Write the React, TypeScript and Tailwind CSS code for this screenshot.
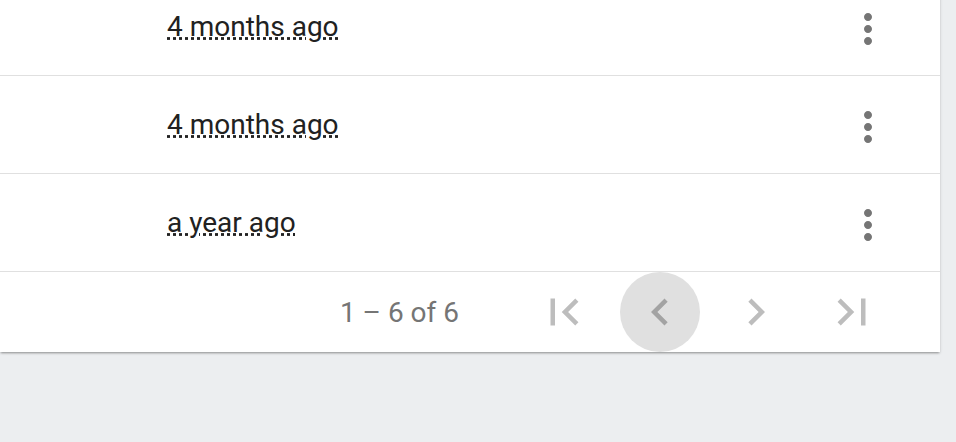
import React from 'react';

const rows = ['4 months ago', '4 months ago', 'a year ago'];

const MoreVert = () => (
  <svg width="48" height="48" viewBox="0 0 24 24" fill="#757575">
    <path d="M12 8c1.1 0 2-.9 2-2s-.9-2-2-2-2 .9-2 2 .9 2 2 2zm0 2c-1.1 0-2 .9-2 2s.9 2 2 2 2-.9 2-2-.9-2-2-2zm0 6c-1.1 0-2 .9-2 2s.9 2 2 2 2-.9 2-2-.9-2-2-2z" />
  </svg>
);

const ICONS: Record<string, string> = {
  first: 'M18.41 16.59L13.82 12l4.59-4.59L17 6l-6 6 6 6zM6 6h2v12H6z',
  prev: 'M15.41 7.41L14 6l-6 6 6 6 1.41-1.41L10.83 12z',
  next: 'M10 6L8.59 7.41 13.17 12l-4.58 4.59L10 18l6-6z',
  last: 'M5.59 7.41L10.18 12l-4.59 4.59L7 18l6-6-6-6zM16 6h2v12h-2z',
};

const PageButton: React.FC<{ icon: string; active?: boolean }> = ({ icon, active }) => (
  <button
    className={
      active
        ? 'w-[80px] h-[80px] rounded-full bg-[#e0e0e0] flex items-center justify-center'
        : 'w-[80px] h-[80px] rounded-full flex items-center justify-center'
    }
  >
    <svg width="54" height="54" viewBox="0 0 24 24" fill={active ? '#a3a3a3' : '#bdbdbd'}>
      <path d={ICONS[icon]} />
    </svg>
  </button>
);

export default function App() {
  return (
    <div className="min-h-screen h-[442px] overflow-hidden bg-[#eceef0] font-['Roboto',sans-serif]">
      <div className="w-[940px] bg-white shadow-[0_2px_2px_-1px_rgba(0,0,0,0.3),0_1px_3px_rgba(0,0,0,0.15)] -mt-[22px]">
        {/* Rows */}
        {rows.map((label, i) => (
          <div key={i} className="h-[98px] border-b border-[#e0e0e0] flex items-center pl-[167px] pr-[48px]">
            <span className="text-[28px] text-[#212121] underline decoration-dotted decoration-[#212121] underline-offset-[2px]">
              {label}
            </span>
            <div className="ml-auto mt-[4px]">
              <MoreVert />
            </div>
          </div>
        ))}

        {/* Paginator */}
        <div className="h-[80px] flex items-center justify-end pr-[48px]">
          <span className="text-[28px] text-[#757575] mr-[65px] mt-[2px]">1 – 6 of 6</span>
          <div className="flex items-center gap-[16px]">
            <PageButton icon="first" />
            <PageButton icon="prev" active />
            <PageButton icon="next" />
            <PageButton icon="last" />
          </div>
        </div>
      </div>
    </div>
  );
}
